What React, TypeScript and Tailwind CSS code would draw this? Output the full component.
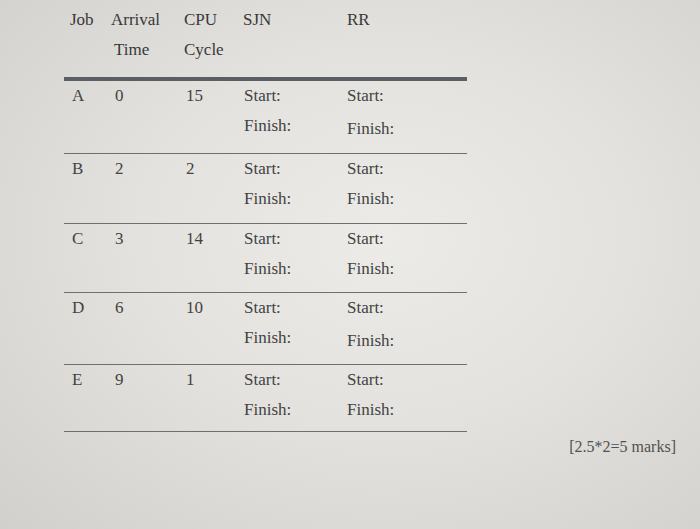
import React from 'react';

type Job = {
  id: string;
  arrival: string;
  cpu: string;
  h: string;
  finishRR: string;
};

// row heights follow the photo, the page is slightly skewed
const jobs: Job[] = [
  { id: 'A', arrival: '0', cpu: '15', h: 'h-[72px]', finishRR: 'mt-[3px]' },
  { id: 'B', arrival: '2', cpu: '2', h: 'h-[69px]', finishRR: 'mt-0' },
  { id: 'C', arrival: '3', cpu: '14', h: 'h-[68px]', finishRR: 'mt-0' },
  { id: 'D', arrival: '6', cpu: '10', h: 'h-[71px]', finishRR: 'mt-[3px]' },
  { id: 'E', arrival: '9', cpu: '1', h: 'h-[66px]', finishRR: 'mt-0' },
];

const cols = 'grid grid-cols-[47px_73px_59px_104px_120px]';

const App: React.FC = () => {
  return (
    <div
      className="w-[700px] h-[529px] overflow-hidden bg-[radial-gradient(ellipse_at_55%_45%,#ecebe8_0%,#e3e2df_45%,#d2d0cc_100%)] text-[#424242] text-[17px] leading-[30px]"
      style={{ fontFamily: '"Liberation Serif", "Times New Roman", serif' }}
    >
      <div className="ml-[64px] w-[403px] pt-[5px]">
        {/* header */}
        <div className={`${cols} text-[#383838]`}>
          <div className="pl-[6px]">Job</div>
          <div>
            <div>Arrival</div>
            <div className="pl-[3px]">Time</div>
          </div>
          <div>
            <div>CPU</div>
            <div>Cycle</div>
          </div>
          <div>SJN</div>
          <div>RR</div>
        </div>
        <div className="mt-[12px] h-[4px] bg-[#5b5e63]" />

        {jobs.map((j) => (
          <div key={j.id} className={`${cols} ${j.h} border-b border-[#6f6f6f] box-content`}>
            <div className="pl-[8px]">{j.id}</div>
            <div className="pl-[4px]">{j.arrival}</div>
            <div className="pl-[2px]">{j.cpu}</div>
            <div className="pl-[1px]">
              <div>Start:</div>
              <div>Finish:</div>
            </div>
            <div>
              <div>Start:</div>
              <div className={j.finishRR}>Finish:</div>
            </div>
          </div>
        ))}
      </div>

      <div className="pr-[24px] text-right text-[16px] text-[#505050]">[2.5*2=5 marks]</div>
    </div>
  );
};

export default App;
